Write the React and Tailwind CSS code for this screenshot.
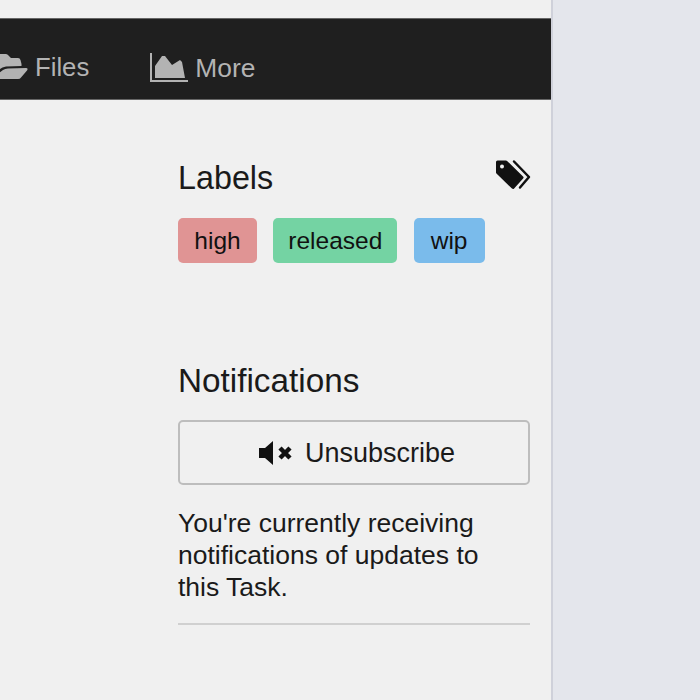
import React from 'react';

const labels = [
  { name: 'high', color: 'bg-[#e09494]', width: 'w-[79px]' },
  { name: 'released', color: 'bg-[#74d3a3]', width: 'w-[124px]' },
  { name: 'wip', color: 'bg-[#7abbeb]', width: 'w-[71px]' },
];

const FolderIcon = () => (
  <svg viewBox="-8 52 36 28" className="w-[36px] h-[28px] mr-[7px] -mt-[2px] shrink-0" fill="currentColor">
    <path d="M-8 55q0-2 2-2H6q1.500 0 2.500 1.500L11 57h7q2 0 2.500 2l1 4v2L6 65.500Q2 66 0 68l-8 8Z" />
    <path d="M-6 78Q-8 78-6 76L3 69Q5 67.500 8 67.500L26 67Q28.500 67 27 69.500L21 76.500Q20 78 18 78Z" />
  </svg>
);

const ChartIcon = () => (
  <svg viewBox="0 0 38 29" className="w-[38px] h-[29px] mr-[7px] -mt-[1px] shrink-0" fill="currentColor">
    <rect x="0" y="0" width="2" height="29" />
    <rect x="0" y="27" width="38" height="2" />
    <path d="M5 25V13L12 3H15L22 12L30 7L32 9L35 25Z" />
  </svg>
);

const TagsIcon = () => (
  <svg viewBox="0 0 36 32" className="w-[36px] h-[32px] -mr-[1px] shrink-0">
    <path d="M2.500 3H11L27 18.500L18 28.500L2.500 13.500Z" fill="#111" stroke="#111" strokeWidth="3" strokeLinejoin="round" />
    <circle cx="7" cy="7.500" r="2" fill="#f0f0f0" />
    <path d="M19 2.500L34 18L25 28.500" fill="none" stroke="#111" strokeWidth="2.500" strokeLinecap="round" strokeLinejoin="round" />
  </svg>
);

const MuteIcon = () => (
  <svg viewBox="0 0 34 24" className="w-[34px] h-[24px] mr-[12px] -mt-[2px] shrink-0">
    <path d="M0 7H6L14 0V24L6 17H0Z" fill="#111" />
    <path d="M21 7L31 17M31 7L21 17" fill="none" stroke="#111" strokeWidth="4.500" />
  </svg>
);

const App = () => {
  return (
    <div className="w-[700px] h-[700px] overflow-hidden flex bg-[#e4e6ec] font-['Liberation_Sans',sans-serif] text-[#1a1a1a]">
      <div className="w-[553px] shrink-0 h-full bg-[#f0f0f0] border-r-[2px] border-[#cfd1da] pt-[18px] flex flex-col">
        {/* Nav bar */}
        <nav className="h-[82px] bg-[#1f1f1f] border-y border-[#666] pt-[18px] flex items-center overflow-hidden text-[#b3b3b3] text-[25.7px] leading-none">
          <div className="flex items-center -ml-[8px]">
            <FolderIcon />
            <span>Files</span>
          </div>
          <div className="flex items-center ml-[61px]">
            <ChartIcon />
            <span className="text-[26.400px]">More</span>
          </div>
        </nav>

        {/* Sidebar */}
        <div className="ml-[178px] w-[352px] flex flex-col">
          <div className="mt-[59px] flex items-start justify-between h-[38px]">
            <h2 className="text-[32.3px] font-normal leading-[38px]">Labels</h2>
            <TagsIcon />
          </div>
          <div className="mt-[21px] flex gap-[16.300px]">
            {labels.map((label) => (
              <span
                key={label.name}
                className={`${label.width} ${label.color} h-[45px] pt-[2px] rounded-[5px] flex items-center justify-center text-[24.5px] text-[#111]`}
              >
                {label.name}
              </span>
            ))}
          </div>

          <h2 className="mt-[99px] text-[33.300px] font-normal leading-[38px]">Notifications</h2>
          <button className="mt-[20px] h-[65px] w-full pl-[6px] pt-[2px] border-2 border-[#bdbdbd] rounded-[5px] flex items-center justify-center text-[27px] text-[#1a1a1a]">
            <MuteIcon />
            Unsubscribe
          </button>
          <p className="mt-[21px] pt-[1px] max-w-[330px] text-[26.5px] leading-[32px]">
            You're currently receiving notifications of updates to this Task.
          </p>
          <hr className="mt-[20px] border-t-2 border-[#d0d0d0]" />
        </div>
      </div>
    </div>
  );
};

export default App;
